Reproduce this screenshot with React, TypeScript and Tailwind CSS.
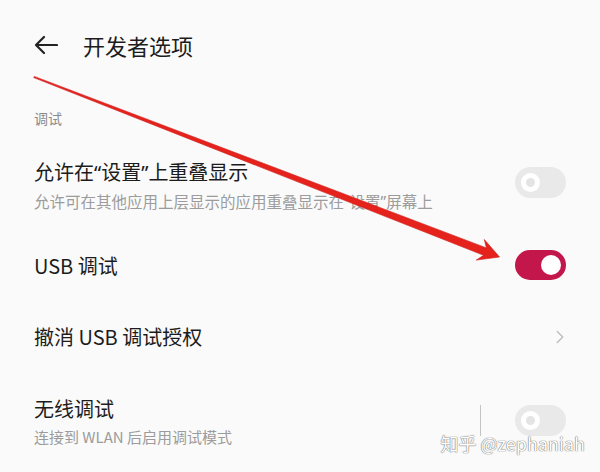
import { ChevronRight } from "lucide-react";

const font = { fontFamily: '"Noto Sans CJK SC", "Noto Sans", sans-serif' };

function Q({ children }: { children: string }) {
  return <span style={{ fontFamily: '"Noto Sans", "Liberation Sans", sans-serif' }}>{children}</span>;
}

function Toggle({ on }: { on: boolean }) {
  if (on) {
    return (
      <div className="relative w-[51px] h-[30px] rounded-full bg-[#c3164b] shrink-0">
        <div className="absolute right-[5px] top-[5px] w-[20px] h-[20px] rounded-full bg-white" />
      </div>
    );
  }
  return (
    <div className="relative w-[51px] h-[31px] rounded-full bg-[#e9e9e9] shrink-0">
      <div className="absolute left-[6px] top-[6px] w-[19px] h-[19px] rounded-full bg-white flex items-center justify-center">
        <div className="w-[9px] h-[9px] rounded-full bg-[#e4e4e4]" />
      </div>
    </div>
  );
}

export default function App() {
  return (
    <div className="relative w-[600px] h-[472px] overflow-hidden bg-[#fafafa] text-[#1c1c1c]" style={font}>
      <div className="flex flex-col px-[34px]">
        {/* header */}
        <div className="flex items-center h-[90px]">
          <svg width="24" height="20" viewBox="0 0 24 20" fill="none" stroke="#222" strokeWidth="2.2" strokeLinecap="round" strokeLinejoin="round">
            <path d="M23 10H2M10 2L2 10l8 8" />
          </svg>
          <span className="ml-[25px] text-[22px] leading-[30px]">开发者选项</span>
        </div>

        <div className="mt-[18px] text-[14px] leading-[20px] text-[#8a8a8a]">调试</div>

        <div className="mt-[30px] flex items-center justify-between">
          <div className="flex flex-col">
            <span className="text-[20px] leading-[28px]">
              允许在<Q>“</Q>设置<Q>”</Q>上重叠显示
            </span>
            <span className="mt-[4px] text-[15.5px] leading-[20px] text-[#9c9c9c]">
              允许可在其他应用上层显示的应用重叠显示在<Q>“</Q>设置<Q>”</Q>屏幕上
            </span>
          </div>
          <div className="mb-[5px]">
            <Toggle on={false} />
          </div>
        </div>

        <div className="mt-[38px] flex items-center justify-between">
          <span className="text-[20px] leading-[28px]">USB 调试</span>
          <div className="mb-[2px]">
            <Toggle on={true} />
          </div>
        </div>

        <div className="mt-[41px] flex items-center justify-between">
          <span className="text-[20px] leading-[28px]">撤消 USB 调试授权</span>
          <ChevronRight className="w-[22px] h-[22px] text-[#bdbdbd] -mr-[5px]" strokeWidth={1.5} />
        </div>

        <div className="mt-[44px] flex items-center justify-between">
          <div className="flex flex-col">
            <span className="text-[20px] leading-[28px]">无线调试</span>
            <span className="mt-[4px] text-[15px] leading-[20px] text-[#9c9c9c]">连接到 WLAN 后启用调试模式</span>
          </div>
          <div className="flex items-center gap-[34px] mb-[2px]">
            <div className="w-px h-[31px] bg-[#c4c4c4]" />
            <Toggle on={false} />
          </div>
        </div>
      </div>

      {/* annotation arrow */}
      <svg className="absolute inset-0 pointer-events-none" width="600" height="472" viewBox="0 0 600 472">
        <polygon
          points="34.3,76.4 486.4,247.9 484.3,239.5 499.5,257 476.3,260.1 483.6,255.3 33.7,77.6"
          fill="#e6221c"
          stroke="#cc1b18"
          strokeWidth="0.6"
          strokeLinejoin="round"
        />
      </svg>

      {/* watermark */}
      <div className="absolute right-[15px] top-[432px] text-[18px] leading-[22px] text-white [text-shadow:0_0_1px_#666,0_0_1px_#666]">
        知乎 @zephaniah
      </div>
    </div>
  );
}
